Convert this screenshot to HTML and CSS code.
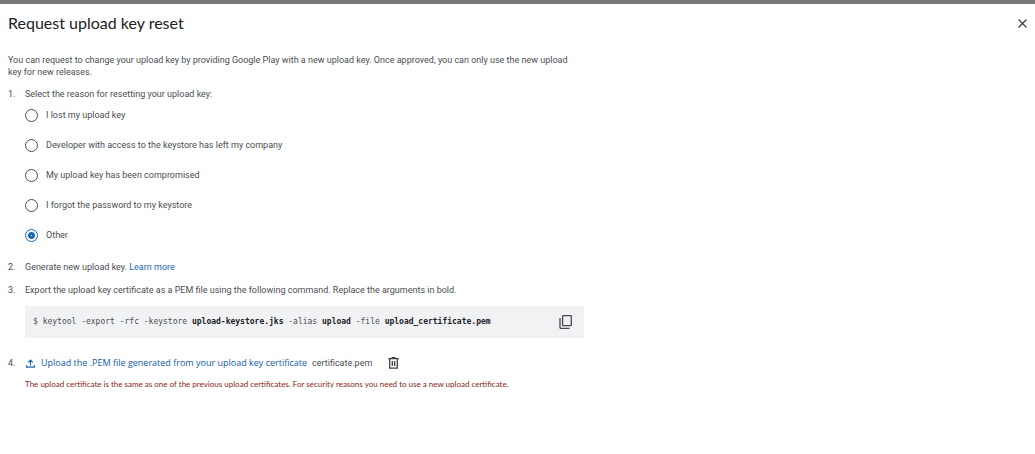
FILE: index.html
```html
<!DOCTYPE html>
<html lang="en">
<head>
	<meta charset="UTF-8">
	<meta name="viewport" content="width=device-width, initial-scale=1.0">
	<title>Request upload key reset</title>
	<link rel="stylesheet" href="styles.css">
</head>
<body>
	<main class="dialog">
		<header class="dialog-header">
			<h1>Request upload key reset</h1>
			<button class="icon-button" type="button" aria-label="Close">
				<svg width="9" height="9" viewBox="0 0 9 9" fill="none" stroke="#3c4043" stroke-width="1.3">
					<path d="M.5.5l8 8M8.5.5l-8 8"/>
				</svg>
			</button>
		</header>

		<form class="content">
			<p class="intro">You can request to change your upload key by providing Google Play with a new upload key. Once approved, you can only use the new upload key for new releases.</p>

			<ol class="steps">
				<li class="step">
					<fieldset class="reasons">
						<legend>Select the reason for resetting your upload key:</legend>
						<label class="reason"><input type="radio" name="reason" value="lost">I lost my upload key</label>
						<label class="reason"><input type="radio" name="reason" value="left">Developer with access to the keystore has left my company</label>
						<label class="reason"><input type="radio" name="reason" value="compromised">My upload key has been compromised</label>
						<label class="reason"><input type="radio" name="reason" value="forgot">I forgot the password to my keystore</label>
						<label class="reason"><input type="radio" name="reason" value="other" checked>Other</label>
					</fieldset>
				</li>
				<li class="step">
					<p>Generate new upload key. <a href="#">Learn more</a></p>
				</li>
				<li class="step">
					<p>Export the upload key certificate as a PEM file using the following command. Replace the arguments in bold.</p>
					<div class="command">
						<code>$ keytool -export -rfc -keystore <b>upload-keystore.jks</b> -alias <b>upload</b> -file <b>upload_certificate.pem</b></code>
						<button class="icon-button" type="button" aria-label="Copy command">
							<svg width="14" height="14" viewBox="0 0 14 14" fill="none" stroke="#45484c" stroke-width="1.3">
								<rect x="3.6" y=".7" width="8.7" height="10" rx=".6"/>
								<path d="M1 3v9.6q0 .7.7.7h8.8"/>
							</svg>
						</button>
					</div>
				</li>
				<li class="step">
					<div class="upload">
						<button class="upload-button" type="button">
							<svg width="10" height="9" viewBox="0 0 10 9" fill="none" stroke="#1967b3" stroke-width="1.2">
								<path d="M5.5 6.5V1M3.2 3.4L5.5 1l2.3 2.4M1.6 6.2v2h7.8v-2"/>
							</svg>
							Upload the .PEM file generated from your upload key certificate
						</button>
						<span class="file-name">certificate.pem</span>
						<button class="icon-button" type="button" aria-label="Remove certificate.pem">
							<svg width="11" height="12" viewBox="0 0 11 12" fill="none" stroke="#3c4043" stroke-width="1.3">
								<path d="M.3 1.7h10.4M3.5.7h4M1.7 2v9.2h7.6V2M4.3 4v5M6.7 4v5"/>
							</svg>
						</button>
					</div>
					<p class="error">The upload certificate is the same as one of the previous upload certificates. For security reasons you need to use a new upload certificate.</p>
				</li>
			</ol>
		</form>
	</main>
</body>
</html>
```

FILE: styles.css
```css
* {
	box-sizing: border-box;
}

body {
	margin: 0;
	border-top: 4px solid #77787a;
	background: #fff;
	color: #4b4e52;
	font: 9px/12px Roboto, "Liberation Sans", sans-serif;
}

h1, p, ol {
	margin: 0;
	padding: 0;
}

button {
	padding: 0;
	border: 0;
	background: none;
	font: inherit;
	cursor: pointer;
}

a {
	color: #1967b3;
	text-decoration: none;
}

.dialog {
	padding: 8px;
}

.dialog-header {
	display: flex;
	align-items: center;
	justify-content: space-between;
}

.dialog-header h1 {
	color: #202124;
	font: 16px/22px Lato, sans-serif;
}

.icon-button {
	display: flex;
}

.content {
	max-width: 576px;
	margin-top: 20px;
}

.intro {
	padding-right: 8px;
}

.steps {
	display: flex;
	flex-direction: column;
	gap: 11px;
	margin-top: 10px;
	list-style: none;
	counter-reset: step;
}

.step {
	display: grid;
	grid-template-columns: 17px 1fr;
	counter-increment: step;
}

.step::before {
	content: counter(step) ".";
}

.step > * {
	grid-column: 2;
}

.reasons {
	margin: 0;
	padding: 0;
	border: 0;
}

.reasons legend {
	padding: 0;
}

.reason {
	display: flex;
	align-items: center;
	gap: 8px;
	width: fit-content;
	height: 30px;
}

.reason input {
	appearance: none;
	width: 13px;
	height: 13px;
	margin: 0;
	border: 1px solid #4b4e52;
	border-radius: 50%;
}

.reason input:checked {
	border-color: #1967b3;
	background: radial-gradient(circle, #fff 0, #1967b3 1px, #1967b3 3px, #fff 4px);
}

.command {
	display: flex;
	align-items: center;
	justify-content: space-between;
	height: 32px;
	margin: 10px 0 8px;
	padding: 0 11px 0 8px;
	background: #f1f2f4;
}

.command code {
	font: 8px/12px "DejaVu Sans Mono", monospace;
}

.command b {
	color: #202124;
}

.upload {
	display: flex;
	align-items: center;
}

.upload-button {
	display: flex;
	align-items: center;
	gap: 6px;
	color: #0f5cab;
	font: 500 9px/12px "Open Sans", sans-serif;
}

.file-name {
	margin: 0 16px 0 5px;
}

.error {
	margin-top: 9px;
	color: #8c1d18;
	font: 8px/12px Lato, sans-serif;
}
```
